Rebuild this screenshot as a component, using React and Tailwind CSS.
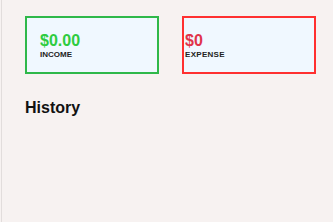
import React from 'react';

export default function App() {
  const income = 0;
  const expense = 0;

  return (
    <div className="min-h-[222px] bg-[#f7f2f1] font-['Liberation_Sans',Arial,sans-serif]">
      <div className="ml-px min-h-[222px] border-l border-[#e2dddc] pl-[23px] pt-[16px]">
        <div className="flex gap-[23px]">
          <div className="w-[134px] h-[58px] border-2 border-[#2fb84a] bg-[#f0f8ff] pl-[13px] pt-[2px] flex flex-col justify-center">
            <div className="text-[16px] font-bold leading-[18px] text-[#2ecc40]">${income.toFixed(2)}</div>
            <div className="text-[8px] font-bold leading-[10px] text-[#222]">INCOME</div>
          </div>
          <div className="w-[134px] h-[58px] border-2 border-[#ff3030] bg-[#f0f8ff] pl-px pt-[2px] flex flex-col justify-center">
            <div className="text-[16px] font-bold leading-[18px] text-[#e0344a]">${expense}</div>
            <div className="text-[8px] font-bold leading-[10px] text-[#222] tracking-[0.3px]">EXPENSE</div>
          </div>
        </div>
        <h2 className="mt-[24px] text-[16px] font-bold leading-[20px] text-[#111]">History</h2>
      </div>
    </div>
  );
}
